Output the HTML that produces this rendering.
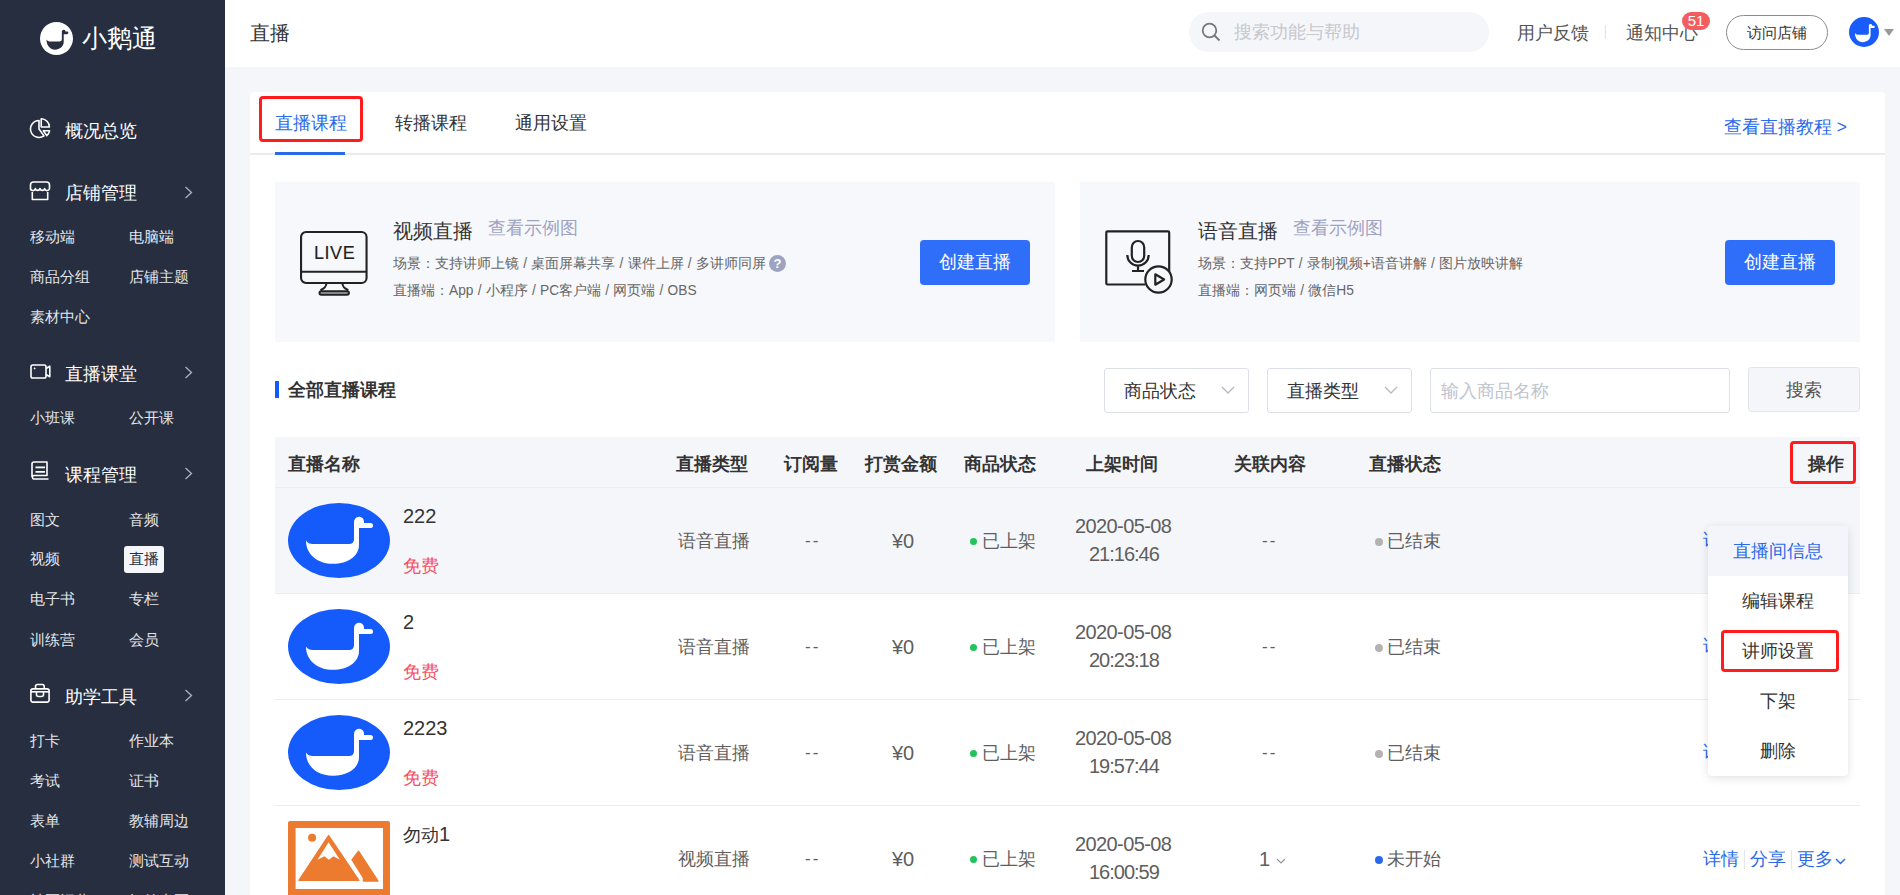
<!DOCTYPE html>
<html><head><meta charset="utf-8">
<style>
*{box-sizing:border-box;margin:0;padding:0}
html,body{width:1900px;height:895px;overflow:hidden;background:#f5f6fa;font-family:"Liberation Sans",sans-serif;color:#333}
.a{position:absolute;white-space:nowrap}
.t15{font-size:15px;line-height:15px}
.t17{font-size:17.5px;line-height:17.5px}
.t20{font-size:20px;line-height:20px}
#side{position:absolute;left:0;top:0;width:225px;height:895px;background:#262e40}
#side .m{color:#fff;font-size:17.5px;line-height:17.5px}
#side .s{color:#e4e6ea;font-size:15px;line-height:15px}
#head{position:absolute;left:225px;top:0;width:1675px;height:67px;background:#fff}
#card{position:absolute;left:250px;top:92px;width:1635px;height:900px;background:#fff;border-radius:4px}
.box{position:absolute;top:182px;width:780px;height:160px;background:#f7f8fc}
.btn{position:absolute;width:110px;height:45px;background:#2e6ef8;border-radius:4px;color:#fff;font-size:17.5px;line-height:45px;text-align:center}
.redbox{position:absolute;border:3px solid #ff1c1c;border-radius:4px}
.sel{position:absolute;top:368px;height:45px;border:1px solid #dcdfe6;border-radius:3px;background:#fff}
.th{position:absolute;top:456px;font-size:17.5px;line-height:17.5px;font-weight:bold;color:#333}
.row{position:absolute;left:275px;width:1585px;height:106px;border-bottom:1px solid #ebedf0}
.g{color:#5e5e5e}
.ds{font-size:13.75px;line-height:13.75px;word-spacing:0.4px;color:#666}
.blue{color:#2a6ae9}
.nm{font-size:20px;line-height:20px;color:#333}
.dg{font-size:20px;line-height:20px}
.dt{letter-spacing:-0.6px}
.tm{letter-spacing:-1px}
</style></head><body>

<div id="side">
  <!-- logo -->
  <svg class="a" style="left:40px;top:22px" width="33" height="33" viewBox="0 0 32 32"><circle cx="16" cy="16" r="16" fill="#fff"/><path d="M6.3 17 Q7.3 18.8 9.3 18.8 H19.3 Q21.2 18.8 21.2 16.8 V8.8 A1.8 1.8 0 0 1 24.6 8.6 V9.2 H26.2 A1.3 1.3 0 0 1 26.2 11.8 H23 V19.2 C23 23.8 19 26.8 14.6 26.8 C10 26.8 6.3 23 6.3 17 Z" fill="#262e40"/></svg>
  <div class="a" style="left:82px;top:27px;color:#fff;font-size:24.7px;line-height:24.7px">小鹅通</div>

  <svg class="a" style="left:29px;top:117px" width="22" height="23" viewBox="0 0 22 23" fill="none" stroke="#fff" stroke-width="1.6" stroke-linejoin="round"><path d="M10 3.5 A8.5 8.5 0 1 0 15 18.9 L10 12 Z"/><path d="M12.2 1.8 V10 H20.4 A8.2 8.2 0 0 0 12.2 1.8 Z"/><path d="M14.3 13.8 H20.6 Q20 16.6 17.8 18.6 Z"/></svg>
  <div class="a m" style="left:65px;top:123px">概况总览</div>

  <svg class="a" style="left:29px;top:180px" width="22" height="21" viewBox="0 0 22 21" fill="none" stroke="#fff" stroke-width="1.6" stroke-linejoin="round"><path d="M4.5 2 H17.5 A3 3 0 0 1 20.5 5 V7.8 A2.4 2.4 0 0 1 15.7 8.5 A2.4 2.4 0 0 1 11 8.5 A2.4 2.4 0 0 1 6.3 8.5 A2.4 2.4 0 0 1 1.5 7.8 V5 A3 3 0 0 1 4.5 2 Z"/><path d="M3.3 12 V19.5 H18.7 V12"/></svg>
  <div class="a m" style="left:65px;top:185px">店铺管理</div>
  <svg class="a" style="left:184px;top:186px" width="9" height="13" viewBox="0 0 9 13" fill="none" stroke="#aeb3bf" stroke-width="1.3"><path d="M1.5 1 l6 5.5 l-6 5.5"/></svg>
  <div class="a s" style="left:30px;top:229px">移动端</div><div class="a s" style="left:129px;top:229px">电脑端</div>
  <div class="a s" style="left:30px;top:269px">商品分组</div><div class="a s" style="left:129px;top:269px">店铺主题</div>
  <div class="a s" style="left:30px;top:309px">素材中心</div>

  <svg class="a" style="left:29px;top:363px" width="23" height="17" viewBox="0 0 23 17" fill="none" stroke="#fff" stroke-width="1.6" stroke-linejoin="round"><rect x="2" y="2" width="15" height="13" rx="1.8"/><path d="M17 5.5 L20.8 3.2 V13.8 L17 11.5"/><circle cx="5.6" cy="5.4" r="0.9" fill="#fff" stroke="none"/></svg>
  <div class="a m" style="left:65px;top:366px">直播课堂</div>
  <svg class="a" style="left:184px;top:366px" width="9" height="13" viewBox="0 0 9 13" fill="none" stroke="#aeb3bf" stroke-width="1.3"><path d="M1.5 1 l6 5.5 l-6 5.5"/></svg>
  <div class="a s" style="left:30px;top:410px">小班课</div><div class="a s" style="left:129px;top:410px">公开课</div>

  <svg class="a" style="left:29px;top:460px" width="22" height="21" viewBox="0 0 22 21" fill="none" stroke="#fff" stroke-width="1.6" stroke-linejoin="round"><path d="M3 17 V4 A2 2 0 0 1 5 2 H18 V15.5 H4.8 A1.8 1.8 0 0 0 4.8 19 H19.5"/><path d="M6.5 7.4 H16 M6.5 11.9 H16"/></svg>
  <div class="a m" style="left:65px;top:467px">课程管理</div>
  <svg class="a" style="left:184px;top:467px" width="9" height="13" viewBox="0 0 9 13" fill="none" stroke="#aeb3bf" stroke-width="1.3"><path d="M1.5 1 l6 5.5 l-6 5.5"/></svg>
  <div class="a s" style="left:30px;top:512px">图文</div><div class="a s" style="left:129px;top:512px">音频</div>
  <div class="a s" style="left:30px;top:551px">视频</div>
  <div class="a" style="left:124px;top:546px;width:40px;height:27px;background:#f5f6fa;border-radius:3px"></div>
  <div class="a s" style="left:129px;top:551px;color:#262e40">直播</div>
  <div class="a s" style="left:30px;top:591px">电子书</div><div class="a s" style="left:129px;top:591px">专栏</div>
  <div class="a s" style="left:30px;top:632px">训练营</div><div class="a s" style="left:129px;top:632px">会员</div>

  <svg class="a" style="left:29px;top:682px" width="22" height="22" viewBox="0 0 22 22" fill="none" stroke="#fff" stroke-width="1.6" stroke-linejoin="round"><rect x="1.9" y="6.9" width="18.2" height="13.2" rx="2"/><path d="M1.9 9.8 H20.1"/><path d="M6.5 6.9 V4.5 A2 2 0 0 1 8.5 2.5 H13.2 A2 2 0 0 1 15.2 4.5 V6.9"/><path d="M7.5 10 V12.5 A2 2 0 0 0 9.5 14.5 H12.5 A2 2 0 0 0 14.5 12.5 V10"/></svg>
  <div class="a m" style="left:65px;top:689px">助学工具</div>
  <svg class="a" style="left:184px;top:689px" width="9" height="13" viewBox="0 0 9 13" fill="none" stroke="#aeb3bf" stroke-width="1.3"><path d="M1.5 1 l6 5.5 l-6 5.5"/></svg>
  <div class="a s" style="left:30px;top:733px">打卡</div><div class="a s" style="left:129px;top:733px">作业本</div>
  <div class="a s" style="left:30px;top:773px">考试</div><div class="a s" style="left:129px;top:773px">证书</div>
  <div class="a s" style="left:30px;top:813px">表单</div><div class="a s" style="left:129px;top:813px">教辅周边</div>
  <div class="a s" style="left:30px;top:853px">小社群</div><div class="a s" style="left:129px;top:853px">测试互动</div>
  <div class="a s" style="left:30px;top:893px">社区运营</div><div class="a s" style="left:129px;top:893px">问答专区</div>
</div>

<div id="head">
</div>
<div class="a t20" style="left:250px;top:23px;color:#333">直播</div>
<div class="a" style="left:1189px;top:12px;width:300px;height:40px;border-radius:20px;background:#f5f6fa"></div>
<svg class="a" style="left:1201px;top:22px" width="20" height="20" viewBox="0 0 20 20" fill="none" stroke="#777" stroke-width="1.8"><circle cx="8.5" cy="8.5" r="6.8"/><path d="M13.5 13.5 l5 5"/></svg>
<div class="a t17" style="left:1234px;top:24px;color:#c6c8cc">搜索功能与帮助</div>
<div class="a t17" style="left:1517px;top:25px;color:#555">用户反馈</div>
<div class="a" style="left:1605px;top:25px;width:1px;height:14px;background:#e3e3e3"></div>
<div class="a t17" style="left:1626px;top:25px;color:#555">通知中心</div>
<div class="a" style="left:1682px;top:12px;width:28px;height:18px;border-radius:9px;background:#f45d60;color:#fff;font-size:15px;line-height:18px;text-align:center">51</div>
<div class="a" style="left:1726px;top:15px;width:102px;height:35px;border:1px solid #8c8c8c;border-radius:18px;color:#333;font-size:15px;line-height:33px;text-align:center">访问店铺</div>
<svg class="a" style="left:1849px;top:17px" width="30" height="30" viewBox="0 0 32 32"><circle cx="16" cy="16" r="16" fill="#1a5cfb"/><path d="M6.3 17 Q7.3 18.8 9.3 18.8 H19.3 Q21.2 18.8 21.2 16.8 V8.8 A1.8 1.8 0 0 1 24.6 8.6 V9.2 H26.2 A1.3 1.3 0 0 1 26.2 11.8 H23 V19.2 C23 23.8 19 26.8 14.6 26.8 C10 26.8 6.3 23 6.3 17 Z" fill="#fff"/></svg>
<svg class="a" style="left:1884px;top:29px" width="10" height="8" viewBox="0 0 10 8"><path d="M0 0 h10 l-5 7z" fill="#999"/></svg>

<div id="card"></div>
<!-- tabs -->
<div class="a" style="left:250px;top:153px;width:1635px;height:2px;background:#ebebeb"></div>
<div class="a t17 blue" style="left:275px;top:115px">直播课程</div>
<div class="a t17" style="left:395px;top:115px">转播课程</div>
<div class="a t17" style="left:515px;top:115px">通用设置</div>
<div class="a" style="left:275px;top:152px;width:70px;height:3px;background:#2a6ae9"></div>
<div class="redbox" style="left:259px;top:96px;width:104px;height:46px"></div>
<div class="a t17 blue" style="left:1724px;top:119px">查看直播教程 ></div>

<!-- option boxes -->
<div class="box" style="left:275px"></div>
<div class="box" style="left:1080px"></div>
<svg class="a" style="left:300px;top:231px" width="68" height="66" viewBox="0 0 68 66" fill="none" stroke="#222" stroke-width="2.1"><rect x="1.05" y="1.05" width="65.5" height="50.9" rx="5"/><path d="M1.05 40.8 h65.5"/><path d="M26.4 52 C26.4 55.5 25 57 20.5 59.3 M42.4 52 C42.4 55.5 43.8 57 48.3 59.3"/><rect x="19.5" y="60.2" width="29.4" height="3.6" rx="1.8" fill="#aaa" stroke-width="2"/><text x="34.6" y="27.9" font-family="Liberation Sans" font-size="18" fill="#222" stroke="#222" stroke-width="0.15" text-anchor="middle" letter-spacing="0.6">LIVE</text></svg>
<div class="a t20" style="left:393px;top:221px;color:#333">视频直播</div>
<div class="a t17" style="left:488px;top:220px;color:#9ea3c2">查看示例图</div>
<div class="a ds g" style="left:393px;top:257px">场景：支持讲师上镜 / 桌面屏幕共享 / 课件上屏 / 多讲师同屏</div>
<svg class="a" style="left:769px;top:255px" width="17" height="17" viewBox="0 0 17 17"><circle cx="8.5" cy="8.5" r="8.5" fill="#9ea3c2"/><text x="8.5" y="13" font-family="Liberation Sans" font-size="13" font-weight="bold" fill="#fff" text-anchor="middle">?</text></svg>
<div class="a ds g" style="left:393px;top:284px">直播端：App / 小程序 / PC客户端 / 网页端 / OBS</div>
<div class="btn" style="left:920px;top:240px">创建直播</div>

<svg class="a" style="left:1103px;top:228px" width="72" height="68" viewBox="0 0 72 68" fill="none" stroke="#222" stroke-width="2.2"><path d="M42 56.5 h-37.5 a1.2 1.2 0 0 1-1.2-1.2 v-50.8 a1.2 1.2 0 0 1 1.2-1.2 h60.5 a1.2 1.2 0 0 1 1.2 1.2 v40.5" stroke-linejoin="round"/><rect x="28.8" y="13" width="12.4" height="21" rx="6.2"/><path d="M24.3 27 a10.7 10.7 0 0 0 21.4 0 M35 38 v5 M29 43 h12"/><circle cx="55.5" cy="51.5" r="13.2" fill="#f7f8fc"/><path d="M52.3 46.3 v10.4 l8.8-5.2z" stroke-linejoin="round" stroke-width="2.2"/></svg>
<div class="a t20" style="left:1198px;top:221px;color:#333">语音直播</div>
<div class="a t17" style="left:1293px;top:220px;color:#9ea3c2">查看示例图</div>
<div class="a ds g" style="left:1198px;top:257px">场景：支持PPT / 录制视频+语音讲解 / 图片放映讲解</div>
<div class="a ds g" style="left:1198px;top:284px">直播端：网页端 / 微信H5</div>
<div class="btn" style="left:1725px;top:240px">创建直播</div>

<!-- filter row -->
<div class="a" style="left:275px;top:381px;width:4px;height:17px;background:#105cfb"></div>
<div class="a t17" style="left:288px;top:382px;font-weight:bold">全部直播课程</div>
<div class="sel" style="left:1104px;width:145px"></div>
<div class="a t17" style="left:1124px;top:383px">商品状态</div>
<svg class="a" style="left:1221px;top:386px" width="14" height="8" viewBox="0 0 14 8" fill="none" stroke="#b5b9c2" stroke-width="1.3"><path d="M1 1 l6 6 l6-6"/></svg>
<div class="sel" style="left:1267px;width:145px"></div>
<div class="a t17" style="left:1287px;top:383px">直播类型</div>
<svg class="a" style="left:1384px;top:386px" width="14" height="8" viewBox="0 0 14 8" fill="none" stroke="#b5b9c2" stroke-width="1.3"><path d="M1 1 l6 6 l6-6"/></svg>
<div class="sel" style="left:1430px;width:300px"></div>
<div class="a t17" style="left:1441px;top:383px;color:#c0c4cc">输入商品名称</div>
<div class="a" style="left:1748px;top:367px;width:112px;height:45px;background:#f5f6f9;border:1px solid #e4e5e8;border-radius:3px"></div>
<div class="a t17" style="left:1786px;top:382px;color:#555">搜索</div>

<!-- table -->
<div class="a" style="left:275px;top:437px;width:1585px;height:51px;background:#f5f6fa;border-bottom:1px solid #ebedf0"></div>
<div class="th" style="left:288px">直播名称</div>
<div class="th" style="left:676px">直播类型</div>
<div class="th" style="left:784px">订阅量</div>
<div class="th" style="left:865px">打赏金额</div>
<div class="th" style="left:964px">商品状态</div>
<div class="th" style="left:1086px">上架时间</div>
<div class="th" style="left:1234px">关联内容</div>
<div class="th" style="left:1369px">直播状态</div>
<div class="th" style="left:1808px">操作</div>
<div class="redbox" style="left:1790px;top:441px;width:66px;height:43px"></div>

<div class="row" style="top:488px;background:#f5f6fa"></div>
<svg class="a" style="left:288px;top:503px" width="102" height="75" viewBox="0 0 102 75"><ellipse cx="51" cy="37.5" rx="51" ry="37.5" fill="#155bfb"/><path d="M18 37.5 Q20 41 25 41 H61 Q66 41 66 36 V19 A5 5 0 0 1 76 18.5 V20 H82.5 A2.5 2.5 0 0 1 82.5 25 H71 V42 C71 53 60 60.8 45 60.8 C30 60.8 18 52 18 37.5 Z" fill="#fff"/></svg>
<div class="a nm" style="left:403px;top:506px">222</div>
<div class="a t17" style="left:403px;top:558px;color:#f5515f">免费</div>
<div class="a t17 g" style="left:678px;top:533px">语音直播</div>
<div class="a dg g" style="left:805px;top:531px;letter-spacing:2px;font-size:17px">--</div>
<div class="a dg g" style="left:892px;top:531px">¥0</div>
<div class="a" style="left:970px;top:538px;width:7px;height:7px;border-radius:50%;background:#23c35b"></div>
<div class="a t17 g" style="left:982px;top:533px">已上架</div>
<div class="a dg g dt" style="left:1075px;top:516px">2020-05-08</div>
<div class="a dg g tm" style="left:1089px;top:544px">21:16:46</div>
<div class="a dg g" style="left:1262px;top:531px;letter-spacing:2px;font-size:17px">--</div>
<div class="a" style="left:1375px;top:538px;width:8px;height:8px;border-radius:50%;background:#b3b3b3"></div>
<div class="a t17 g" style="left:1387px;top:533px">已结束</div>
<div class="a t17 blue" style="left:1703px;top:532px">详</div>
<div class="row" style="top:594px;background:#fff"></div>
<svg class="a" style="left:288px;top:609px" width="102" height="75" viewBox="0 0 102 75"><ellipse cx="51" cy="37.5" rx="51" ry="37.5" fill="#155bfb"/><path d="M18 37.5 Q20 41 25 41 H61 Q66 41 66 36 V19 A5 5 0 0 1 76 18.5 V20 H82.5 A2.5 2.5 0 0 1 82.5 25 H71 V42 C71 53 60 60.8 45 60.8 C30 60.8 18 52 18 37.5 Z" fill="#fff"/></svg>
<div class="a nm" style="left:403px;top:612px">2</div>
<div class="a t17" style="left:403px;top:664px;color:#f5515f">免费</div>
<div class="a t17 g" style="left:678px;top:639px">语音直播</div>
<div class="a dg g" style="left:805px;top:637px;letter-spacing:2px;font-size:17px">--</div>
<div class="a dg g" style="left:892px;top:637px">¥0</div>
<div class="a" style="left:970px;top:644px;width:7px;height:7px;border-radius:50%;background:#23c35b"></div>
<div class="a t17 g" style="left:982px;top:639px">已上架</div>
<div class="a dg g dt" style="left:1075px;top:622px">2020-05-08</div>
<div class="a dg g tm" style="left:1089px;top:650px">20:23:18</div>
<div class="a dg g" style="left:1262px;top:637px;letter-spacing:2px;font-size:17px">--</div>
<div class="a" style="left:1375px;top:644px;width:8px;height:8px;border-radius:50%;background:#b3b3b3"></div>
<div class="a t17 g" style="left:1387px;top:639px">已结束</div>
<div class="a t17 blue" style="left:1703px;top:638px">详</div>
<div class="row" style="top:700px;background:#fff"></div>
<svg class="a" style="left:288px;top:715px" width="102" height="75" viewBox="0 0 102 75"><ellipse cx="51" cy="37.5" rx="51" ry="37.5" fill="#155bfb"/><path d="M18 37.5 Q20 41 25 41 H61 Q66 41 66 36 V19 A5 5 0 0 1 76 18.5 V20 H82.5 A2.5 2.5 0 0 1 82.5 25 H71 V42 C71 53 60 60.8 45 60.8 C30 60.8 18 52 18 37.5 Z" fill="#fff"/></svg>
<div class="a nm" style="left:403px;top:718px">2223</div>
<div class="a t17" style="left:403px;top:770px;color:#f5515f">免费</div>
<div class="a t17 g" style="left:678px;top:745px">语音直播</div>
<div class="a dg g" style="left:805px;top:743px;letter-spacing:2px;font-size:17px">--</div>
<div class="a dg g" style="left:892px;top:743px">¥0</div>
<div class="a" style="left:970px;top:750px;width:7px;height:7px;border-radius:50%;background:#23c35b"></div>
<div class="a t17 g" style="left:982px;top:745px">已上架</div>
<div class="a dg g dt" style="left:1075px;top:728px">2020-05-08</div>
<div class="a dg g tm" style="left:1089px;top:756px">19:57:44</div>
<div class="a dg g" style="left:1262px;top:743px;letter-spacing:2px;font-size:17px">--</div>
<div class="a" style="left:1375px;top:750px;width:8px;height:8px;border-radius:50%;background:#b3b3b3"></div>
<div class="a t17 g" style="left:1387px;top:745px">已结束</div>
<div class="a t17 blue" style="left:1703px;top:744px">详</div>
<div class="row" style="top:806px;background:#fff"></div>
<svg class="a" style="left:288px;top:821px" width="102" height="76" viewBox="0 0 102 76"><rect x="0" y="0" width="102" height="76" rx="2" fill="#ec7b30"/><rect x="7.6" y="7" width="87.4" height="61" fill="#fff"/><circle cx="24.1" cy="16.7" r="4" fill="#ec7b30"/><path d="M40.6 14.6 L11 59.3 H70.8 Z" fill="#ec7b30" stroke="#ec7b30" stroke-width="1.5" stroke-linejoin="round"/><path d="M40.6 21.3 L29.5 38.8 L36.4 35.2 L40.9 38.8 L45.5 35.2 L51.8 38.8 Z" fill="#fff"/><path d="M70.6 30.3 L64.2 38.8 L75.5 56.9 V60 H89.8 Z" fill="#ec7b30" stroke="#ec7b30" stroke-width="1.5" stroke-linejoin="round"/></svg>
<div class="a nm" style="left:403px;top:824px"><span style="font-size:17.5px">勿动</span>1</div>
<div class="a t17 g" style="left:678px;top:851px">视频直播</div>
<div class="a dg g" style="left:805px;top:849px;letter-spacing:2px;font-size:17px">--</div>
<div class="a dg g" style="left:892px;top:849px">¥0</div>
<div class="a" style="left:970px;top:856px;width:7px;height:7px;border-radius:50%;background:#23c35b"></div>
<div class="a t17 g" style="left:982px;top:851px">已上架</div>
<div class="a dg g dt" style="left:1075px;top:834px">2020-05-08</div>
<div class="a dg g tm" style="left:1089px;top:862px">16:00:59</div>
<div class="a dg g" style="left:1259px;top:849px">1</div>
<svg class="a" style="left:1276px;top:858px" width="10" height="6" viewBox="0 0 10 6" fill="none" stroke="#999" stroke-width="1.2"><path d="M1 1 l4 4 l4-4"/></svg>
<div class="a" style="left:1375px;top:856px;width:8px;height:8px;border-radius:50%;background:#2a6ae9"></div>
<div class="a t17 g" style="left:1387px;top:851px">未开始</div>
<div class="a t17 blue" style="left:1703px;top:851px">详情</div><div class="a" style="left:1744px;top:850px;width:1px;height:19px;background:#e6e6ea"></div><div class="a t17 blue" style="left:1750px;top:851px">分享</div><div class="a" style="left:1791px;top:850px;width:1px;height:19px;background:#e6e6ea"></div><div class="a t17 blue" style="left:1797px;top:851px">更多</div><svg class="a" style="left:1835px;top:858px" width="11" height="7" viewBox="0 0 11 7" fill="none" stroke="#2a6ae9" stroke-width="1.5"><path d="M1 1 l4.5 4.5 l4.5-4.5"/></svg>
<div class="a" style="left:1708px;top:526px;width:140px;height:250px;background:#fff;border-radius:4px;box-shadow:0 2px 10px rgba(0,0,0,0.12)"></div>
<div class="a" style="left:1708px;top:526px;width:140px;height:50px;background:#f3f5fa;border-radius:4px 4px 0 0"></div>
<div class="a t17" style="left:1708px;width:140px;text-align:center;top:543px;color:#2a6ae9">直播间信息</div>
<div class="a t17" style="left:1708px;width:140px;text-align:center;top:593px;color:#333">编辑课程</div>
<div class="a t17" style="left:1708px;width:140px;text-align:center;top:643px;color:#333">讲师设置</div>
<div class="a t17" style="left:1708px;width:140px;text-align:center;top:693px;color:#333">下架</div>
<div class="a t17" style="left:1708px;width:140px;text-align:center;top:743px;color:#333">删除</div>
<div class="redbox" style="left:1721px;top:630px;width:118px;height:42px"></div>
</body></html>
